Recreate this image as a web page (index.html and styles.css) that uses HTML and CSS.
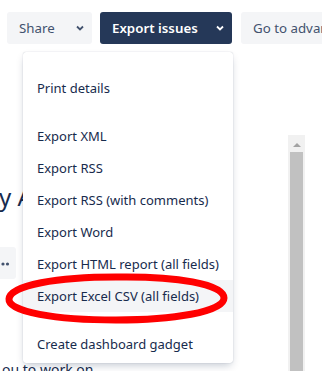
FILE: index.html
```html
<!DOCTYPE html>
<html lang="en">

<head>
    <meta charset="UTF-8">
    <meta name="viewport" content="width=device-width, initial-scale=1.0">
    <title>Export issues</title>
    <link rel="stylesheet" href="styles.css">
</head>

<body>
    <div class="toolbar">
        <button class="btn btn-share">
            <span>Share</span>
            <svg class="chev" viewBox="0 0 8 8"><path d="M1 2.5 L4 5.5 L7 2.5" /></svg>
        </button>
        <button class="btn btn-export">
            <span>Export issues</span>
            <svg class="chev" viewBox="0 0 8 8"><path d="M1 2.5 L4 5.5 L7 2.5" /></svg>
        </button>
        <button class="btn btn-search">
            <span>Go to advanced search</span>
        </button>
    </div>

    <div class="page">
        <div class="content">
            <h2 class="title">y A</h2>
            <div class="more">
                <svg viewBox="0 0 16 32"><circle cx="3" cy="17" r="1.6" /><circle cx="7.5" cy="17" r="1.6" /></svg>
            </div>
            <p class="intro">ou to work on</p>
        </div>
        <div class="scrollbar">
            <div class="arrow"></div>
            <div class="thumb"></div>
        </div>
    </div>

    <!-- menu of the Export issues button -->
    <div class="menu">
        <ul class="section">
            <li>Print details</li>
        </ul>
        <ul class="section">
            <li>Export XML</li>
            <li>Export RSS</li>
            <li>Export RSS (with comments)</li>
            <li>Export Word</li>
            <li>Export HTML report (all fields)</li>
            <li class="hover">Export Excel CSV (all fields)</li>
        </ul>
        <ul class="section">
            <li>Create dashboard gadget</li>
        </ul>
    </div>

    <!-- red mark drawn over the screenshot -->
    <svg class="mark" viewBox="0 0 322 371">
        <path d="M116 277 C176 276 224 284 224 298 C224 312 172 320 116 320 C56 320 8 312 9 299 C10 285 58 277 116 277 Z" />
    </svg>
</body>

</html>
```

FILE: styles.css
```css
* {
    margin: 0;
    padding: 0;
    box-sizing: border-box;
}

body {
    width: 322px;
    height: 371px;
    overflow: hidden;
    position: relative;
    background: #FFF;
    font-family: "Noto Sans", "Open Sans", sans-serif;
    font-size: 13px;
    color: #172B4D;
}

.toolbar {
    display: flex;
    gap: 8px;
    padding: 12px 0 0 7px;
}

.btn {
    display: flex;
    flex-shrink: 0;
    align-items: center;
    justify-content: space-between;
    height: 32px;
    padding: 0 8px 0 12px;
    border: 0;
    border-radius: 3px;
    background: #F4F5F7;
    color: #42526E;
    font-family: inherit;
    font-size: 13.3px;
    white-space: nowrap;
}

.btn-share {
    width: 85px;
}

.btn-export {
    width: 132px;
    background: #253858;
    color: #FFF;
    font-weight: 600;
}

.btn-search {
    width: 170px;
    margin-left: 1px;
}

.chev {
    width: 8px;
    height: 8px;
    fill: none;
    stroke: currentColor;
    stroke-width: 1.8;
}

.page {
    display: flex;
}

.content {
    flex: 1;
}

.title {
    margin-top: 139px;
    margin-left: -1px;
    font-size: 24px;
    font-weight: 400;
    line-height: 28px;
}

.more {
    width: 16px;
    height: 32px;
    margin-top: 36px;
    border-radius: 0 3px 3px 0;
    background: #F4F5F7;
}

.more svg {
    display: block;
    width: 16px;
    height: 32px;
    fill: #42526E;
}

.intro {
    margin-top: 81px;
    margin-left: 2px;
    font-size: 14px;
    line-height: 20px;
}

.scrollbar {
    display: flex;
    flex-direction: column;
    align-items: center;
    width: 17px;
    height: 236px;
    margin: 91px 17px 0 0;
    background: #F1F1F1;
}

.arrow {
    margin-top: 8px;
    border: 4px solid transparent;
    border-top: 0;
    border-bottom: 4px solid #A3A3A3;
}

.thumb {
    width: 13px;
    flex: 1;
    margin-top: 5px;
    background: #C1C1C1;
}

.menu {
    position: absolute;
    left: 23px;
    top: 52px;
    width: 210px;
    padding: 4px 0 3px;
    border-radius: 3px;
    background: #FFF;
    box-shadow: 0 4px 8px -2px rgba(9, 30, 66, 0.25), 0 0 1px rgba(9, 30, 66, 0.31);
}

.section {
    padding-top: 16px;
    list-style: none;
}

.section li {
    height: 32px;
    padding: 0 12px 0 14px;
    line-height: 32px;
    font-size: 13px;
    white-space: nowrap;
}

.section li.hover {
    background: #F4F5F7;
}

.mark {
    position: absolute;
    left: 0;
    top: 0;
    width: 322px;
    height: 371px;
    fill: none;
    stroke: #F00;
    stroke-width: 7;
}
```
